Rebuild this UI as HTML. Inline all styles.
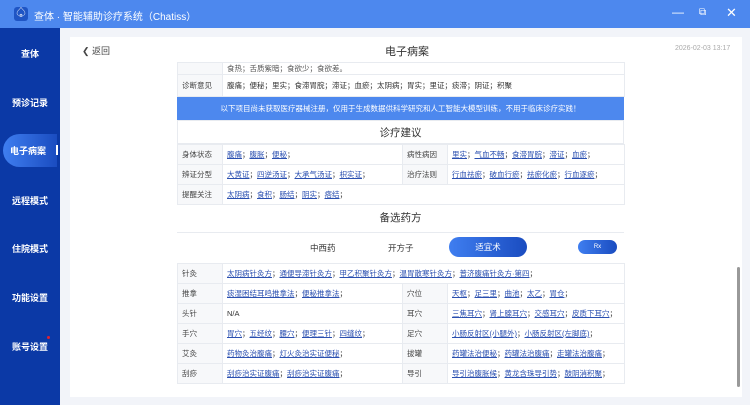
<!DOCTYPE html>
<html><head><meta charset="utf-8"><style>
*{margin:0;padding:0;box-sizing:border-box}
body{width:750px;height:405px;overflow:hidden;background:#f2f4f9;font-family:"Liberation Sans","Noto Sans CJK SC",sans-serif;position:relative}
.a{position:absolute}
#top{left:0;top:0;width:750px;height:28px;background:#4d88ee;color:#fff;font-size:10px}
#side{left:0;top:28px;width:60px;height:377px;background:#0b39a6}
.si{position:absolute;left:0;width:60px;text-align:center;color:#fff;font-size:9px;font-weight:bold}
#card{left:70px;top:37px;width:672px;height:360px;background:#fff}
table{border-collapse:collapse;font-size:7.5px;color:#333;table-layout:fixed;width:447px}
td{border:1px solid #e8ebf0;padding:0 4px;height:20px;white-space:nowrap;overflow:hidden}
td.l{background:#f7f8fa;color:#444}
u{color:#2a4fb0}
.hd{text-align:center;font-size:10.5px;color:#333}
</style></head><body>
<div id="top" class="a">
 <div class="a" style="left:14px;top:7px;width:14px;height:14px;background:#1f55c4;border-radius:3px;color:#fff;font-size:10px;text-align:center;line-height:14px">♤</div>
 <div class="a" style="left:34px;top:8px">查体 · 智能辅助诊疗系统（Chatiss）</div>
 <div class="a" style="left:672px;top:5px;font-size:12px">—</div>
 <div class="a" style="left:699px;top:7px;font-size:10px">⧉</div>
 <div class="a" style="left:726px;top:5px;font-size:13px">✕</div>
</div>
<div id="side" class="a">
 <div class="si" style="top:19px">查体</div>
 <div class="si" style="top:68px">预诊记录</div>
 <div class="a" style="left:3px;top:106px;width:54px;height:33px;border-radius:17px 0 0 17px;background:linear-gradient(90deg,#3f7ef0,#1a4cc0)"></div>
 <div class="si" style="top:116px;left:0;width:56px">电子病案</div>
 <div class="a" style="left:56px;top:117px;width:1.5px;height:10px;background:#fff"></div>
 <div class="si" style="top:166px">远程模式</div>
 <div class="si" style="top:214px">住院模式</div>
 <div class="si" style="top:263px">功能设置</div>
 <div class="si" style="top:312px">账号设置</div>
 <div class="a" style="left:47px;top:308px;width:3px;height:3px;border-radius:50%;background:#e02030"></div>
</div>
<div id="card" class="a"></div>
<div class="a" style="left:82px;top:44px;font-size:9px;color:#444">❮ 返回</div>
<div class="a" style="left:385px;top:43px;font-size:11px;color:#333">电子病案</div>
<div class="a" style="left:675px;top:45px;font-size:7px;color:#aaa">2026-02-03 13:17</div>
<div class="a" style="left:737px;top:267px;width:3px;height:120px;background:#999;border-radius:2px"></div>
<div class="a" style="left:177px;top:62px;width:449px;overflow:hidden;height:330px">
<table>
<colgroup><col style="width:45px"><col style="width:180px"><col style="width:45px"><col style="width:177px"></colgroup>
<tr><td class="l" style="height:11px"></td><td colspan="3" style="height:11px;color:#555">食热；舌质紫暗；食欲少；食欲差。</td></tr>
<tr><td class="l" style="height:22px">诊断意见</td><td colspan="3">腹痛；便秘；里实；食滞胃脘；滞证；血瘀；太阴病；胃实；里证；痰滞；阴证；积聚</td></tr>
</table>
<div style="width:447px;height:23px;background:#4d88ee;color:#fff;font-size:7.5px;text-align:center;line-height:23px">以下项目尚未获取医疗器械注册，仅用于生成数据供科学研究和人工智能大模型训练，不用于临床诊疗实践！</div>
<div class="hd" style="width:447px;height:24px;line-height:24px;border:1px solid #e8ebf0">诊疗建议</div>
<table>
<colgroup><col style="width:45px"><col style="width:180px"><col style="width:45px"><col style="width:177px"></colgroup>
<tr><td class="l">身体状态</td><td><u>腹痛</u>；<u>腹胀</u>；<u>便秘</u>；</td><td class="l">病性病因</td><td><u>里实</u>；<u>气血不畅</u>；<u>食滞胃脘</u>；<u>滞证</u>；<u>血瘀</u>；</td></tr>
<tr><td class="l">辨证分型</td><td><u>大黄证</u>；<u>四逆汤证</u>；<u>大承气汤证</u>；<u>枳实证</u>；</td><td class="l">治疗法则</td><td><u>行血祛瘀</u>；<u>破血行瘀</u>；<u>祛瘀化瘀</u>；<u>行血逐瘀</u>；</td></tr>
<tr><td class="l">提醒关注</td><td colspan="3"><u>太阴病</u>；<u>食积</u>；<u>肠结</u>；<u>阴实</u>；<u>痞结</u>；</td></tr>
</table>
<div class="hd" style="width:447px;height:27px;line-height:27px">备选药方</div>
<div style="position:relative;width:447px;height:31px;border-top:1px solid #e8ebf0;font-size:8.5px;color:#333">
 <div class="a" style="left:133px;top:9px">中西药</div>
 <div class="a" style="left:211px;top:9px">开方子</div>
 <div class="a" style="left:272px;top:4px;width:78px;height:20px;border-radius:10px;background:linear-gradient(90deg,#3f7ef0,#1a4cc0);color:#fff;text-align:center;line-height:20px">适宜术</div>
 <div class="a" style="left:401px;top:7px;width:39px;height:14px;border-radius:7px;background:linear-gradient(90deg,#3f7ef0,#1a4cc0);color:#fff;text-align:center;line-height:14px;font-size:6px">Rx</div>
</div>
<table>
<colgroup><col style="width:45px"><col style="width:180px"><col style="width:45px"><col style="width:177px"></colgroup>
<tr><td class="l">针灸</td><td colspan="3"><u>太阴病针灸方</u>；<u>通便导滞针灸方</u>；<u>甲乙积聚针灸方</u>；<u>温胃散寒针灸方</u>；<u>普济腹痛针灸方·第四</u>；</td></tr>
<tr><td class="l">推拿</td><td><u>痰湿困结耳鸣推拿法</u>；<u>便秘推拿法</u>；</td><td class="l">穴位</td><td><u>天枢</u>；<u>足三里</u>；<u>曲池</u>；<u>太乙</u>；<u>胃仓</u>；</td></tr>
<tr><td class="l">头针</td><td>N/A</td><td class="l">耳穴</td><td><u>三焦耳穴</u>；<u>肾上腺耳穴</u>；<u>交感耳穴</u>；<u>皮质下耳穴</u>；</td></tr>
<tr><td class="l">手穴</td><td><u>胃穴</u>；<u>五经纹</u>；<u>腰穴</u>；<u>便理三针</u>；<u>四缝纹</u>；</td><td class="l">足穴</td><td><u>小肠反射区(小腿外)</u>；<u>小肠反射区(左脚底)</u>；</td></tr>
<tr><td class="l">艾灸</td><td><u>药物灸治腹痛</u>；<u>灯火灸治实证便秘</u>；</td><td class="l">拔罐</td><td><u>药罐法治便秘</u>；<u>药罐法治腹痛</u>；<u>走罐法治腹痛</u>；</td></tr>
<tr><td class="l">刮痧</td><td><u>刮痧治实证腹痛</u>；<u>刮痧治实证腹痛</u>；</td><td class="l">导引</td><td><u>导引治腹胀候</u>；<u>黄龙含珠导引势</u>；<u>鼓阴消积聚</u>；</td></tr>
</table>
</div>
</body></html>
